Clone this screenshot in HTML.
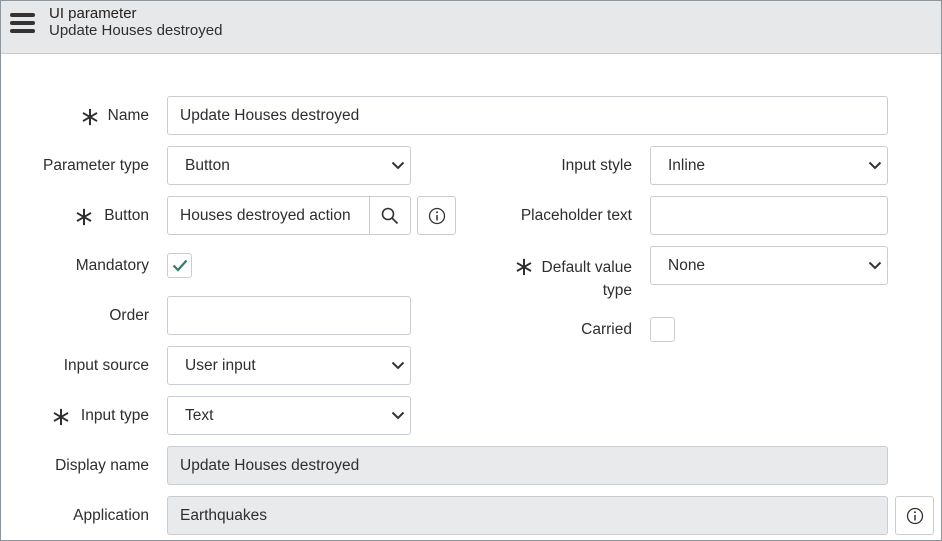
<!DOCTYPE html>
<html><head><style>
body{margin:0;width:942px;height:541px;overflow:hidden;font-family:"Liberation Sans",sans-serif;color:#2e2e2e;background:#fff;position:relative}
.frame{position:absolute;left:0;top:0;width:940px;height:539px;border:1px solid #8e959b}
.hdr{position:absolute;left:0;top:0;width:942px;height:53px;background:#e6e8ea;border-bottom:1px solid #c8cbce}
.t1{position:absolute;left:49px;top:5px;font-size:15px;color:#222}
.t2{position:absolute;left:49px;top:22px;font-size:15px;color:#2e2e2e}
.bar{position:absolute;left:10px;width:25px;height:4px;border-radius:2px;background:#333}
.lbl{position:absolute;font-size:15.5px;text-align:right;color:#2e2e2e}
.inp{position:absolute;height:39px;border:1px solid #c9cdd1;border-radius:3px;background:#fff;box-sizing:border-box;font-size:15.5px;line-height:37px;padding-left:12px}
.ro{background:#e9eaeb}
.sel{padding-left:17px}
.chev{position:absolute;right:5px;top:14px}
.btn{position:absolute;width:39px;height:39px;border:1px solid #c9cdd1;border-radius:3px;box-sizing:border-box;background:#fff}
.cb{position:absolute;width:25px;height:25px;border:1px solid #c9cdd1;border-radius:3px;box-sizing:border-box;background:#fff}
</style></head><body>
<div class="hdr">
<div class="bar" style="top:13px"></div><div class="bar" style="top:21px"></div><div class="bar" style="top:29px"></div>
<div class="t1">UI parameter</div><div class="t2">Update Houses destroyed</div>
</div>

<svg width="0" height="0" style="position:absolute"><defs>
<symbol id="ch" viewBox="0 0 14 9"><path d="M1.5 1.5 L7 7 L12.5 1.5" fill="none" stroke="#333" stroke-width="2"/></symbol>
<symbol id="st" viewBox="0 0 20 20"><path d="M10 1V19M2.2 5.5L17.8 14.5M2.2 14.5L17.8 5.5" stroke="#2e2e2e" stroke-width="2.2"/></symbol>
<symbol id="in" viewBox="0 0 18 18"><circle cx="9" cy="9" r="7.5" fill="none" stroke="#333" stroke-width="1.3"/><circle cx="9" cy="5.3" r="1" fill="#333"/><path d="M9 8V13.5" stroke="#333" stroke-width="1.5"/></symbol>
</defs></svg>

<svg style="position:absolute;left:81px;top:108px" width="18" height="18"><use href="#st"/></svg>
<div class="lbl" style="right:793px;top:107px">Name</div>
<div class="inp" style="left:167px;top:96px;width:721px">Update Houses destroyed</div>

<div class="lbl" style="right:793px;top:157px">Parameter type</div>
<div class="inp sel" style="left:167px;top:146px;width:244px">Button<svg class="chev" width="14" height="9"><use href="#ch"/></svg></div>

<div class="lbl" style="right:310px;top:157px">Input style</div>
<div class="inp sel" style="left:650px;top:146px;width:238px">Inline<svg class="chev" width="14" height="9"><use href="#ch"/></svg></div>

<svg style="position:absolute;left:75px;top:208px" width="18" height="18"><use href="#st"/></svg>
<div class="lbl" style="right:793px;top:207px">Button</div>
<div class="inp" style="left:167px;top:196px;width:244px">Houses destroyed action</div>
<div style="position:absolute;left:369px;top:197px;width:1px;height:37px;background:#c9cdd1"></div>
<svg style="position:absolute;left:381px;top:207px" width="18" height="18" viewBox="0 0 18 18"><circle cx="7" cy="7" r="5.5" fill="none" stroke="#333" stroke-width="1.6"/><path d="M11 11L16.5 16.5" stroke="#333" stroke-width="1.8"/></svg>
<div class="btn" style="left:417px;top:196px"><svg style="position:absolute;left:10px;top:10px" width="18" height="18"><use href="#in"/></svg></div>

<div class="lbl" style="right:310px;top:207px">Placeholder text</div>
<div class="inp" style="left:650px;top:196px;width:238px"></div>

<div class="lbl" style="right:793px;top:257px">Mandatory</div>
<div class="cb" style="left:167px;top:253px"><svg style="position:absolute;left:4px;top:5px" width="16" height="13" viewBox="0 0 16 13"><path d="M1.5 6.5L6 11L14.5 1.5" fill="none" stroke="#2f7d6b" stroke-width="2.2"/></svg></div>

<svg style="position:absolute;left:515px;top:258px" width="18" height="18"><use href="#st"/></svg>
<div class="lbl" style="right:310px;top:256px;line-height:23px">Default value<br>type</div>
<div class="inp sel" style="left:650px;top:246px;width:238px">None<svg class="chev" width="14" height="9"><use href="#ch"/></svg></div>

<div class="lbl" style="right:793px;top:307px">Order</div>
<div class="inp" style="left:167px;top:296px;width:244px"></div>

<div class="lbl" style="right:310px;top:321px">Carried</div>
<div class="cb" style="left:650px;top:317px"></div>

<div class="lbl" style="right:793px;top:357px">Input source</div>
<div class="inp sel" style="left:167px;top:346px;width:244px">User input<svg class="chev" width="14" height="9"><use href="#ch"/></svg></div>

<svg style="position:absolute;left:52px;top:408px" width="18" height="18"><use href="#st"/></svg>
<div class="lbl" style="right:793px;top:407px">Input type</div>
<div class="inp sel" style="left:167px;top:396px;width:244px">Text<svg class="chev" width="14" height="9"><use href="#ch"/></svg></div>

<div class="lbl" style="right:793px;top:457px">Display name</div>
<div class="inp ro" style="left:167px;top:446px;width:721px">Update Houses destroyed</div>

<div class="lbl" style="right:793px;top:507px">Application</div>
<div class="inp ro" style="left:167px;top:496px;width:721px">Earthquakes</div>
<div class="btn" style="left:895px;top:496px"><svg style="position:absolute;left:10px;top:10px" width="18" height="18"><use href="#in"/></svg></div>

<div class="frame"></div>
</body></html>
